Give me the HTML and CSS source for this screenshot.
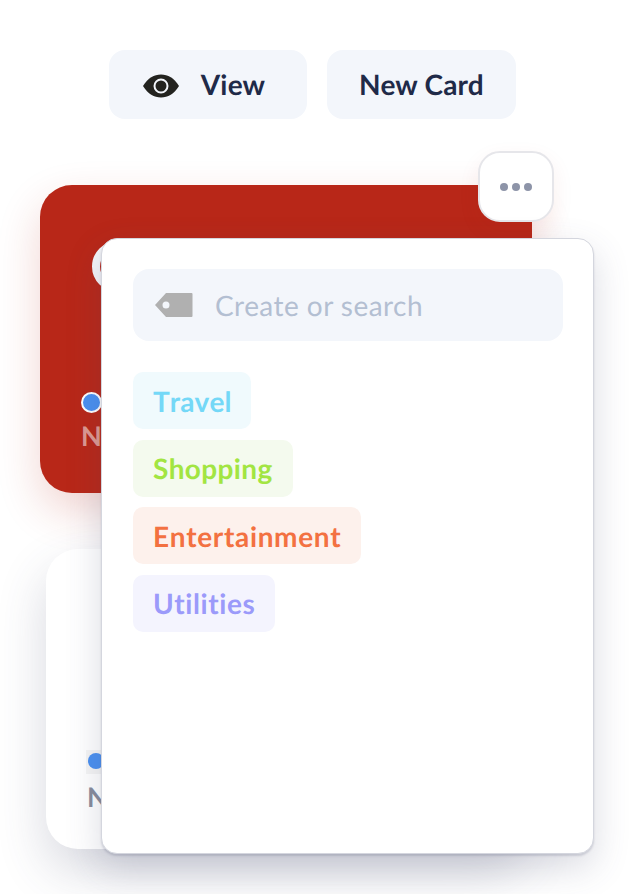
FILE: index.html
```html
<!DOCTYPE html>
<html lang="en">
<head>
<meta charset="utf-8">
<title>Cards</title>
<link rel="stylesheet" href="styles.css">
</head>
<body>
<div class="toolbar">
  <button class="btn btn-view">
    <svg class="eye" viewBox="0 0 36 24" width="36" height="24" aria-hidden="true">
      <path d="M0 12C5 4 11 .5 18 .5S31 4 36 12c-5 8-11 11.500-18 11.500S5 20 0 12Z" fill="#23231f"/>
      <circle cx="18" cy="12" r="6.500" fill="none" stroke="#f3f6fb" stroke-width="2"/>
    </svg>
    <span>View</span>
  </button>
  <button class="btn btn-new">New Card</button>
</div>

<div class="card card-red">
  <div class="avatar"></div>
  <div class="card-foot">
    <span class="dot dot-ring"></span>
    <span class="name name-light">N</span>
  </div>
</div>

<div class="card card-white">
  <div class="card-foot">
    <span class="dot-box"><span class="dot"></span></span>
    <span class="name name-dark">N</span>
  </div>
</div>

<button class="more" aria-label="More">
  <span class="more-dot"></span><span class="more-dot"></span><span class="more-dot"></span>
</button>

<div class="popup">
  <div class="search">
    <svg class="tag" viewBox="0 0 38 24" width="38" height="24" aria-hidden="true">
      <path d="M11 0H36.500a1 1 0 0 1 1 1V23a1 1 0 0 1-1 1H11L0 12Z M11 8.500a3.500 3.500 0 1 0 0 7a3.500 3.500 0 1 0 0-7Z" fill="#b0b0b0" fill-rule="evenodd"/>
    </svg>
    <span class="placeholder">Create or search</span>
  </div>
  <div class="tags">
    <span class="chip chip-travel">Travel</span>
    <span class="chip chip-shopping">Shopping</span>
    <span class="chip chip-ent">Entertainment</span>
    <span class="chip chip-util">Utilities</span>
  </div>
</div>
</body>
</html>
```

FILE: styles.css
```css
* { box-sizing: border-box; }
html, body { margin: 0; padding: 0; }
body {
  position: relative;
  width: 636px;
  height: 894px;
  overflow: hidden;
  background: #fff;
  font-family: Lato, "Open Sans", sans-serif;
  text-rendering: geometricPrecision;
  font-variant-ligatures: none;
}
.toolbar {
  display: flex;
  gap: 20px;
  padding: 50px 0 0 109px;
  height: 185px;
}
.btn {
  height: 69px;
  padding: 0 0 2px;
  border: 0;
  border-radius: 16px;
  background: #f3f6fb;
  color: #1f2a48;
  font: 700 28px Lato, sans-serif;
  letter-spacing: .2px;
  text-rendering: geometricPrecision;
  font-variant-ligatures: none;
  display: flex;
  align-items: center;
  justify-content: center;
}
.btn-view { width: 198px; gap: 22px; padding-right: 8px; }
.btn-new { width: 189px; }
.eye { flex: none; margin-top: 4px; }
.card {
  position: relative;
  border-radius: 32px;
}
.card-red {
  width: 492px;
  height: 308px;
  margin-left: 40px;
  background: #b82718;
  box-shadow: 0 18px 44px rgba(184, 39, 24, .2);
}
.card-white {
  width: 480px;
  height: 300px;
  margin: 56px 0 0 46px;
  background: #fff;
  box-shadow: 0 22px 50px rgba(60, 66, 100, .2);
}
.avatar {
  position: absolute;
  left: 52px;
  top: 56px;
  width: 51px;
  height: 51px;
  border-radius: 50%;
  border: 8px solid #f4f5f8;
}
.card-foot {
  position: absolute;
  left: 41px;
  top: 207px;
  display: flex;
  flex-direction: column;
  gap: 8px;
}
.card-white .card-foot { top: 201px; }
.dot {
  display: block;
  width: 16px;
  height: 16px;
  border-radius: 50%;
  background: #4a90f0;
}
.dot-ring {
  width: 21px;
  height: 21px;
  border: 2px solid #fff;
}
.dot-box {
  display: block;
  width: 30px;
  height: 24px;
  margin-left: -1px;
  padding: 3px 2px;
  background: #f5f5f5;
}
.name { font-size: 27px; line-height: 30px; font-weight: 700; }
.name-light { color: rgba(255, 255, 255, .55); }
.name-dark { color: #888c9c; }
.more {
  position: absolute;
  left: 478px;
  top: 151px;
  width: 76px;
  height: 71px;
  padding: 0;
  border: 2px solid #e6e6ea;
  border-radius: 22px;
  background: #fff;
  box-shadow: 0 8px 22px rgba(184, 39, 24, .07);
  display: flex;
  align-items: center;
  justify-content: center;
  gap: 4px;
}
.more-dot {
  width: 8px;
  height: 8px;
  border-radius: 50%;
  background: #8d94a8;
}
.popup {
  position: absolute;
  left: 101px;
  top: 238px;
  width: 493px;
  height: 616px;
  padding: 30px 30px 0 31px;
  border: 1px solid #d4d6de;
  border-radius: 16px;
  background: #fff;
  box-shadow: 0 2px 2px rgba(90, 95, 125, .22), 0 14px 36px rgba(70, 76, 110, .2);
}
.search {
  height: 72px;
  border-radius: 16px;
  background: #f3f6fb;
  display: flex;
  align-items: center;
  gap: 22px;
  padding-left: 22px;
}
.tag { flex: none; }
.placeholder { color: #b3bfd2; font-size: 28px; letter-spacing: .45px; }
.tags {
  margin-top: 31px;
  display: flex;
  flex-direction: column;
  align-items: flex-start;
  gap: 10.6px;
}
.chip {
  height: 57px;
  padding: 0 20px;
  border-radius: 10px;
  display: flex;
  align-items: center;
  font-size: 28px;
  font-weight: 700;
  letter-spacing: .35px;
  font-kerning: none;
}
.chip-travel { background: #f0fafd; color: #74d8f7; letter-spacing: .05px; }
.chip-shopping { background: #f4faee; color: #a2e542; }
.chip-ent { background: #fdf1ec; color: #f37141; letter-spacing: .65px; }
.chip-util { background: #f4f4fe; color: #9b9afa; letter-spacing: .57px; }
```
